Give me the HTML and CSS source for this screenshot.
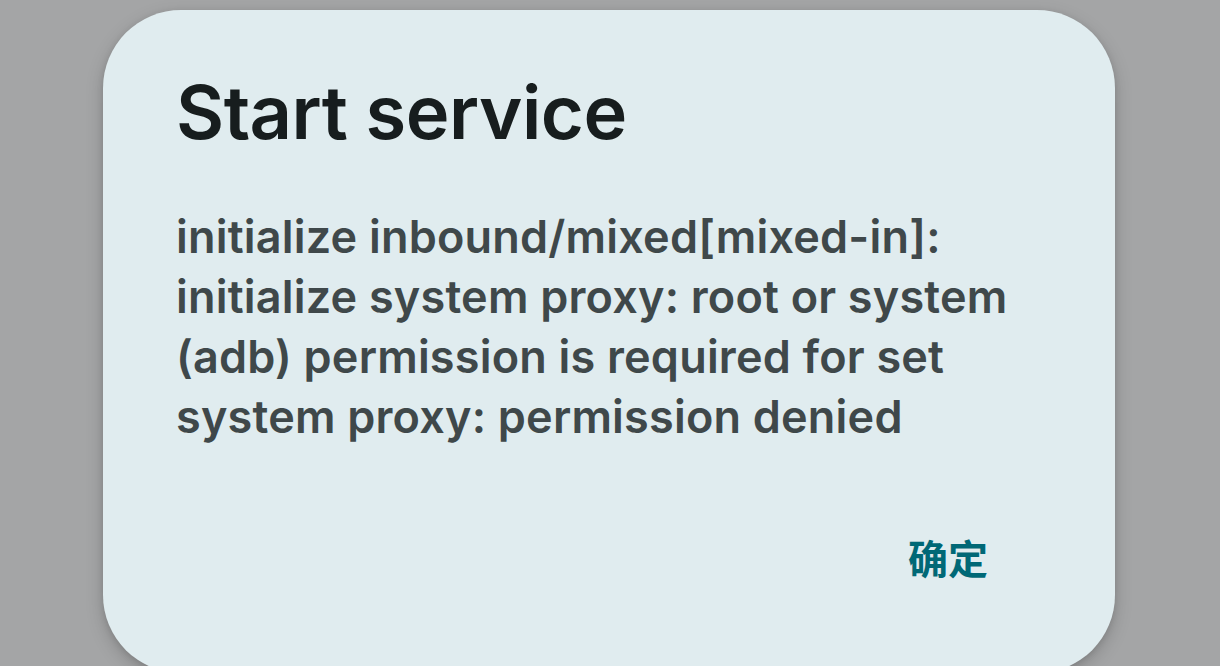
FILE: index.html
```html
<!DOCTYPE html>
<html lang="en">
<head>
<meta charset="utf-8">
<title>Start service</title>
<link rel="stylesheet" href="styles.css">
</head>
<body>
<div class="screen">
  <div class="dialog">
    <h1 class="title">Start service</h1>
    <p class="message">initialize inbound/mixed[mixed-in]: initialize system proxy: root or system (adb) permission is required for set system proxy: permission denied</p>
    <div class="actions">
      <button class="btn">确定</button>
    </div>
  </div>
</div>
</body>
</html>
```
FILE: styles.css
```css
html, body {
  margin: 0;
  padding: 0;
  width: 1220px;
  height: 666px;
  overflow: hidden;
  background: #a4a5a6;
}
.screen {
  width: 1220px;
  height: 666px;
  padding-top: 10px;
  box-sizing: border-box;
  display: flex;
  justify-content: center;
}
.dialog {
  width: 1012px;
  height: 663px;
  margin-left: -2px;
  flex: none;
  box-sizing: border-box;
  background: #e0ecef;
  border-radius: 78px;
  box-shadow: 0 6px 18px rgba(0, 0, 0, 0.18), 0 2px 6px rgba(0, 0, 0, 0.1);
  padding: 54px 73px 0 73px;
  display: flex;
  flex-direction: column;
  font-family: Inter, "Noto Sans", "Noto Sans CJK SC", sans-serif;
}
.title {
  margin: 0;
  font-size: 74px;
  line-height: 96px;
  font-weight: 600;
  color: #171d1e;
  letter-spacing: -0.5px;
}
.message {
  margin: 47px 0 0 0;
  font-size: 45px;
  line-height: 60px;
  font-weight: 600;
  color: #3f484a;
  letter-spacing: 0.2px;
}
.actions {
  display: flex;
  justify-content: flex-end;
  margin-top: 82px;
}
.btn {
  border: none;
  background: transparent;
  padding: 0 54px 0 0;
  font-family: "Noto Sans CJK SC", sans-serif;
  font-size: 40px;
  line-height: 56px;
  font-weight: 700;
  color: #006876;
}
```
